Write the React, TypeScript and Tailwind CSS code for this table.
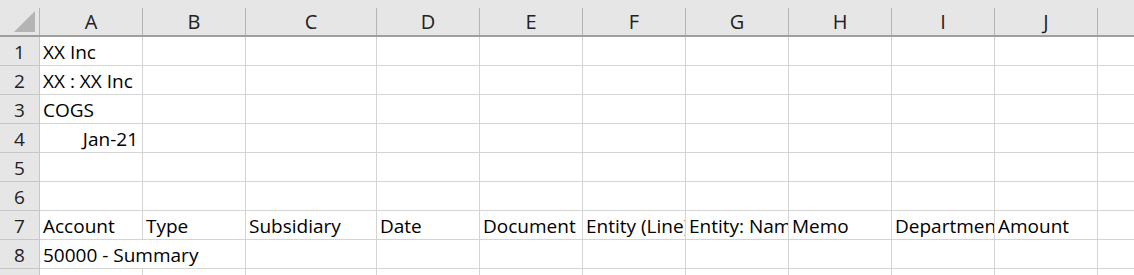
const columns = ["A", "B", "C", "D", "E", "F", "G", "H", "I", "J", "K"];

// row contents keyed by column letter; "right" aligns like a date value
type Cell = { text: string; right?: boolean; span?: number };
const rows: Record<number, Record<string, Cell>> = {
  1: { A: { text: "XX Inc" } },
  2: { A: { text: "XX : XX Inc" } },
  3: { A: { text: "COGS" } },
  4: { A: { text: "Jan-21", right: true } },
  5: {},
  6: {},
  7: {
    A: { text: "Account" },
    B: { text: "Type" },
    C: { text: "Subsidiary" },
    D: { text: "Date" },
    E: { text: "Document" },
    F: { text: "Entity (Line)" },
    G: { text: "Entity: Name" },
    H: { text: "Memo" },
    I: { text: "Department" },
    J: { text: "Amount" },
  },
  8: { A: { text: "50000 - Summary", span: 2 } },
  9: {},
};

const font = { fontFamily: '"Open Sans", "Noto Sans", sans-serif' };

function Corner() {
  return (
    <div className="flex h-[37px] flex-col border-b-2 border-[#9f9f9f] bg-[#e6e6e6]">
      <div className="mt-2 flex flex-1 items-center justify-end border-r border-[#b5b5b5] pr-[3px]">
        <svg width="22" height="22" viewBox="0 0 22 22">
          <polygon points="21,0 21,21 0,21" fill="#b4b4b4" />
        </svg>
      </div>
    </div>
  );
}

function ColHeader({ label }: { label: string }) {
  return (
    <div className="flex h-[37px] flex-col border-b-2 border-[#9f9f9f] bg-[#e6e6e6]">
      <div className="mt-2 flex flex-1 items-end justify-center border-r border-[#b5b5b5] pb-[3px] text-[20px] leading-none text-[#222]">
        {label}
      </div>
    </div>
  );
}

export default function App() {
  const rowNums = Object.keys(rows).map(Number);

  return (
    <div className="h-[275px] w-[1134px] overflow-hidden bg-white" style={font}>
      <div className="grid w-max grid-cols-[40px_103px_103px_131px_103px_103px_103px_103px_103px_103px_103px_103px]">
        <Corner />
        {columns.map((c) => (
          <ColHeader key={c} label={c} />
        ))}

        {rowNums.map((n) => {
          const cells: React.ReactNode[] = [];
          let skip = 0;
          columns.forEach((c) => {
            if (skip > 0) {
              skip--;
              return;
            }
            const cell = rows[n][c];
            if (cell?.span) skip = cell.span - 1;
            cells.push(
              <div
                key={`${n}-${c}`}
                className={`flex h-[29px] items-end overflow-hidden whitespace-nowrap border-r border-b border-[#d4d4d4] pb-[3px] text-[19px] leading-none text-black ${
                  cell?.right ? "justify-end pr-[4px]" : "pl-[3px]"
                } ${cell?.span === 2 ? "col-span-2" : ""}`}
              >
                {cell?.text ?? ""}
              </div>
            );
          });
          return [
            <div
              key={`h-${n}`}
              className="flex h-[29px] items-end justify-center border-r border-b border-[#c6c6c6] bg-[#e6e6e6] pb-[3px] text-[19px] leading-none text-[#222]"
            >
              {n < 9 ? n : ""}
            </div>,
            ...cells,
          ];
        })}
      </div>
    </div>
  );
}
